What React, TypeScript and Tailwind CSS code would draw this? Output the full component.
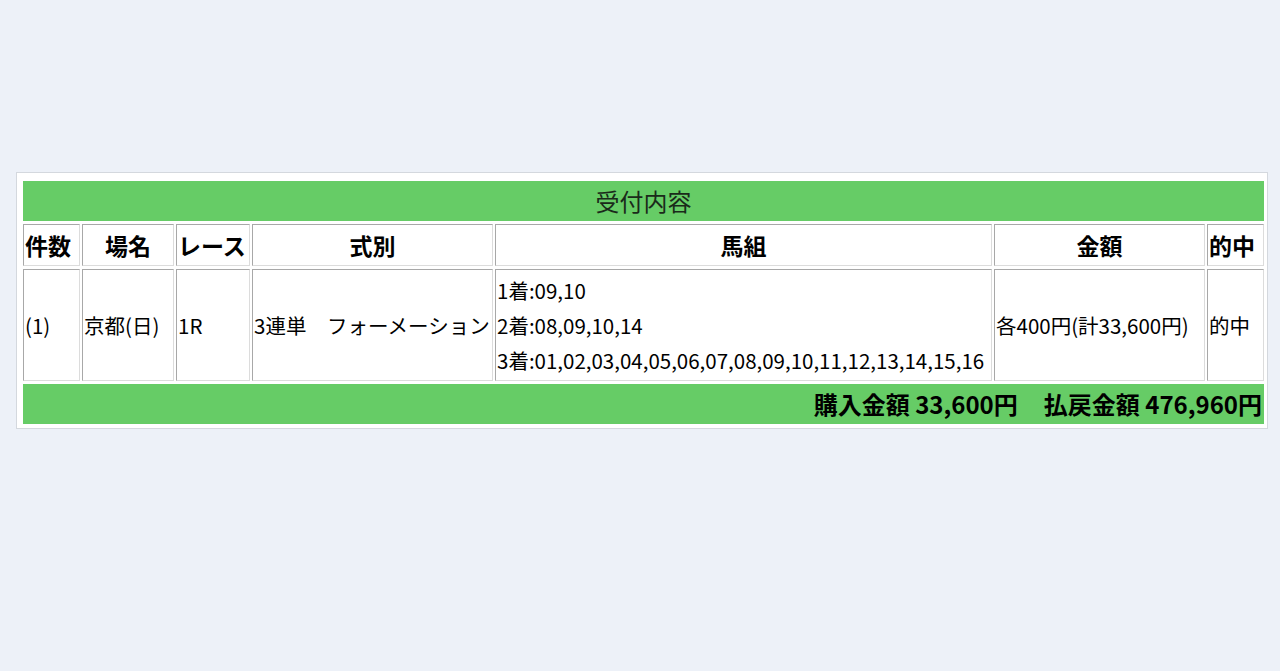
const font = { fontFamily: '"Noto Sans CJK JP", "Liberation Sans", sans-serif' };

const cell = 'border border-t-[#a8a8a8] border-l-[#a8a8a8] border-b-[#dcdcdc] border-r-[#dcdcdc] bg-white px-[1px] py-0';

const baken = ['1着:09,10', '2着:08,09,10,14', '3着:01,02,03,04,05,06,07,08,09,10,11,12,13,14,15,16'];

export default function App() {
  return (
    <div className="min-h-[671px] bg-[#edf1f8] pt-[172px]" style={font}>
      <div className="ml-[16px] w-[1252px] border border-[#d4d8de] bg-white pt-[5px] pb-[1px] pl-[4px] pr-[1px]">
        <table className="w-full table-fixed border-separate border-spacing-x-[2px] border-spacing-y-[3px] text-black">
          <colgroup>
            <col className="w-[57px]" />
            <col className="w-[92px]" />
            <col className="w-[74px]" />
            <col className="w-[241px]" />
            <col className="w-[497px]" />
            <col className="w-[211px]" />
            <col className="w-[57px]" />
          </colgroup>
          <tbody>
            <tr>
              <td colSpan={7} className="h-[40px] bg-[#66cc66] text-center text-[24px] leading-none text-[#1a2a1a]">
                受付内容
              </td>
            </tr>
            <tr className="h-[42px] text-[23px] font-bold">
              <td className={`${cell} whitespace-nowrap`}>件数</td>
              <td className={`${cell} text-center`}>場名</td>
              <td className={`${cell} whitespace-nowrap`}>レース</td>
              <td className={`${cell} text-center`}>式別</td>
              <td className={`${cell} text-center`}>馬組</td>
              <td className={`${cell} text-center`}>金額</td>
              <td className={`${cell} whitespace-nowrap`}>的中</td>
            </tr>
            <tr className="h-[112px] text-[20.5px]">
              <td className={cell}>(1)</td>
              <td className={`${cell} whitespace-nowrap`}>京都(日)</td>
              <td className={cell}>1R</td>
              <td className={`${cell} whitespace-nowrap`}>3連単　フォーメーション</td>
              <td className={`${cell} whitespace-nowrap`}>
                {baken.map((line) => (
                  <div key={line} className="leading-[35px]">{line}</div>
                ))}
              </td>
              <td className={`${cell} whitespace-nowrap`}>各400円(計33,600円)</td>
              <td className={`${cell} whitespace-nowrap`}>的中</td>
            </tr>
            <tr>
              <td colSpan={7} className="h-[40px] whitespace-nowrap bg-[#66cc66] pr-[2px] text-right text-[24px] font-bold leading-none">
                購入金額 33,600円<span className="ml-[26px]">払戻金額 476,960円</span>
              </td>
            </tr>
          </tbody>
        </table>
      </div>
    </div>
  );
}
